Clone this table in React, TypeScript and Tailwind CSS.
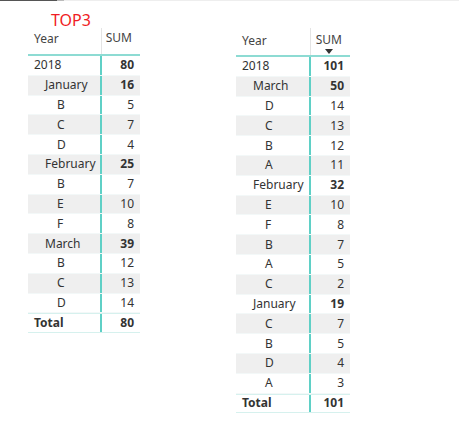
type Row = { label: string; value: number; level: 0 | 1 | 2 | 3 };

const leftRows: Row[] = [
  { label: "2018", value: 80, level: 0 },
  { label: "January", value: 16, level: 1 },
  { label: "B", value: 5, level: 2 },
  { label: "C", value: 7, level: 2 },
  { label: "D", value: 4, level: 2 },
  { label: "February", value: 25, level: 1 },
  { label: "B", value: 7, level: 2 },
  { label: "E", value: 10, level: 2 },
  { label: "F", value: 8, level: 2 },
  { label: "March", value: 39, level: 1 },
  { label: "B", value: 12, level: 2 },
  { label: "C", value: 13, level: 2 },
  { label: "D", value: 14, level: 2 },
  { label: "Total", value: 80, level: 3 },
];

const rightRows: Row[] = [
  { label: "2018", value: 101, level: 0 },
  { label: "March", value: 50, level: 1 },
  { label: "D", value: 14, level: 2 },
  { label: "C", value: 13, level: 2 },
  { label: "B", value: 12, level: 2 },
  { label: "A", value: 11, level: 2 },
  { label: "February", value: 32, level: 1 },
  { label: "E", value: 10, level: 2 },
  { label: "F", value: 8, level: 2 },
  { label: "B", value: 7, level: 2 },
  { label: "A", value: 5, level: 2 },
  { label: "C", value: 2, level: 2 },
  { label: "January", value: 19, level: 1 },
  { label: "C", value: 7, level: 2 },
  { label: "B", value: 5, level: 2 },
  { label: "D", value: 4, level: 2 },
  { label: "A", value: 3, level: 2 },
  { label: "Total", value: 101, level: 3 },
];

function Matrix({ rows, labelW, sorted }: { rows: Row[]; labelW: string; sorted?: boolean }) {
  return (
    <div className="text-[12px] text-[#333]">
      {/* header */}
      <div className={sorted ? "flex h-[27px]" : "flex h-[26px]"}>
        <div className={`${labelW} pl-[6px] ${sorted ? "pt-[4px]" : "pt-[2px]"} text-[#444]`}>Year</div>
        <div className="w-[2px] flex justify-center">
          <div className="w-px h-full bg-[#e4e4e4]" />
        </div>
        <div className={`flex-1 flex flex-col items-end pr-[8px] ${sorted ? "pt-[4px]" : "pt-[2px]"} text-[#444]`}>
          <span className="leading-[16px]">SUM</span>
          {sorted && (
            <svg width="8" height="5" viewBox="0 0 8 5" className="mr-[9px] mt-[1px]">
              <path d="M0 0h8L4 5z" fill="#333" />
            </svg>
          )}
        </div>
      </div>
      <div className="h-[2px] bg-[#8ddbd3]" />
      {rows.map((r, i) => {
        const shaded = i % 2 === 1 && r.level !== 3;
        const indent =
          r.level === 0 || r.level === 3 ? "pl-[6px]" : r.level === 1 ? "pl-[17px]" : "pl-[29px]";
        const boldVal = r.level !== 2;
        return (
          <div
            key={i}
            className={`flex h-[19.8px] items-center leading-none ${
              shaded ? "bg-[#efefef]" : "bg-white"
            } ${r.level === 3 ? "border-y border-[#d6f1ee]" : "border-b border-[#f3f8f8]"}`}
          >
            <div className={`${labelW} ${indent} ${r.level === 3 ? "font-bold" : ""}`}>{r.label}</div>
            <div className="w-[2px] self-stretch bg-[#5fd0c6]" />
            <div className={`flex-1 text-right pr-[6px] ${boldVal ? "font-bold" : ""}`}>{r.value}</div>
          </div>
        );
      })}
    </div>
  );
}

export default function App() {
  return (
    <div className="w-[459px] h-[448px] bg-white overflow-hidden" style={{ fontFamily: '"Noto Sans", "Open Sans", sans-serif' }}>
      <div className="flex h-px">
        <div className="w-[57px] bg-[#555]" />
        <div className="w-[7px] bg-[#bbb]" />
        <div className="flex-1 bg-[#eee]" />
      </div>
      <div className="flex">
        <div className="ml-[28px] w-[112px]">
          <div className="h-[27px] pt-[10px] pl-[23px] text-[16px] leading-[18px] text-[#f01c24]">TOP3</div>
          <Matrix rows={leftRows} labelW="w-[72px]" />
        </div>
        <div className="ml-[96px] w-[114px] pt-[27px]">
          <Matrix rows={rightRows} labelW="w-[73px]" sorted />
        </div>
      </div>
    </div>
  );
}
